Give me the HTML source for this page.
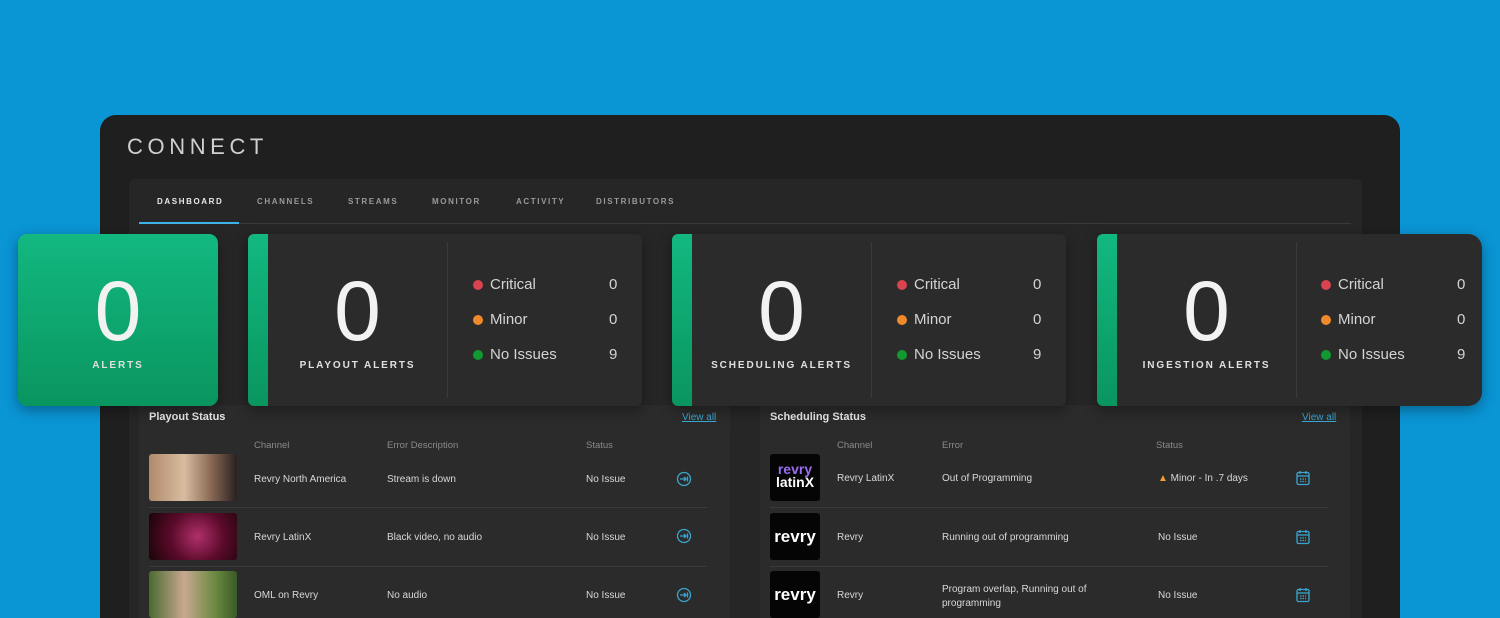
<!DOCTYPE html>
<html style="height:618px;overflow:hidden"><head><style>
*{margin:0;padding:0;box-sizing:border-box}
body{width:1500px;height:618px;background:#0a95d5;font-family:"Liberation Sans",sans-serif;position:relative;overflow:hidden}
.abs{position:absolute}
.frame{left:100px;top:115px;width:1300px;height:503px;background:#1f1f1f;border-radius:16px 16px 0 0}
.logo{left:127px;top:134px;color:#d0d0d0;font-size:22px;letter-spacing:4.6px;font-weight:300}
.inner{left:129px;top:179px;width:1233px;height:439px;background:#262626;border-radius:6px 6px 0 0}
.tab{top:197px;font-size:8px;letter-spacing:1.6px;color:#9a9a9a;font-weight:bold}
.line{left:139px;top:223px;width:1212px;height:1px;background:#3a3a3a}
.uline{left:139px;top:222px;width:100px;height:2px;background:#3cb4e6}
.green{left:18px;top:234px;width:200px;height:172px;border-radius:9px;background:linear-gradient(#12b880,#0a955f);box-shadow:0 4px 14px rgba(0,0,0,.35)}
.card{top:234px;height:172px;background:#2b2b2b;border-radius:6px;overflow:hidden;box-shadow:0 4px 14px rgba(0,0,0,.35)}
.bar{left:0;top:0;width:20px;height:100%;background:linear-gradient(#12b880,#0a955f)}
.zero{font-size:84px;color:#f2f2f2;font-weight:300;text-align:center;line-height:1}
.lbl{font-size:10px;letter-spacing:1.9px;color:#e0e0e0;font-weight:bold;text-align:center}
.div{top:8px;width:1px;height:156px;background:#3a3a3a}
.st{font-size:15px;color:#d4d4d4}
.dot{width:10px;height:10px;border-radius:50%}
.panel{top:405px;height:213px;background:#2b2b2b}
.ptitle{font-size:11px;color:#e8e8e8;font-weight:bold}
.va{font-size:10px;color:#3aa6cf;text-decoration:underline}
.hd{font-size:9.5px;color:#8a8a8a}
.cell{font-size:10px;color:#d8d8d8}
.sep{height:1px;background:#3a3a3a}
.thumb{width:88px;height:47px;border-radius:3px}
.sq{width:50px;height:47px;background:#050505;border-radius:3px;color:#fff;font-weight:bold;text-align:center}
</style></head><body>
<div class="abs frame"></div>
<div class="abs logo">CONNECT</div>
<div class="abs inner"></div>
<div class="abs tab" style="left:157px;color:#e8e8e8">DASHBOARD</div>
<div class="abs tab" style="left:257px">CHANNELS</div>
<div class="abs tab" style="left:348px">STREAMS</div>
<div class="abs tab" style="left:432px">MONITOR</div>
<div class="abs tab" style="left:516px">ACTIVITY</div>
<div class="abs tab" style="left:596px">DISTRIBUTORS</div>
<div class="abs line"></div><div class="abs uline"></div>

<div class="abs panel" style="left:139px;width:591px"></div>
<div class="abs panel" style="left:760px;width:590px"></div>
<div class="abs ptitle" style="left:149px;top:411px">Playout Status</div>
<div class="abs va" style="left:682px;top:412px">View all</div>
<div class="abs hd" style="left:254px;top:440px">Channel</div>
<div class="abs hd" style="left:387px;top:440px">Error Description</div>
<div class="abs hd" style="left:586px;top:440px">Status</div>
<div class="abs thumb" style="left:149px;top:454px;background:linear-gradient(90deg,#b08a6a,#d8bca0 40%,#8a6a55 70%,#2a2020)"></div>
<div class="abs thumb" style="left:149px;top:513px;background:radial-gradient(circle at 55% 50%,#b0306a,#5a0a2a 50%,#1a0508)"></div>
<div class="abs thumb" style="left:149px;top:571px;background:linear-gradient(90deg,#4a6a30,#c8a890 40%,#6a8a40 75%,#3a5a28)"></div>
<div class="abs cell" style="left:254px;top:474px">Revry North America</div>
<div class="abs cell" style="left:387px;top:474px">Stream is down</div>
<div class="abs cell" style="left:586px;top:474px">No Issue</div>
<div class="abs cell" style="left:254px;top:532px">Revry LatinX</div>
<div class="abs cell" style="left:387px;top:532px">Black video, no audio</div>
<div class="abs cell" style="left:586px;top:532px">No Issue</div>
<div class="abs cell" style="left:254px;top:590px">OML on Revry</div>
<div class="abs cell" style="left:387px;top:590px">No audio</div>
<div class="abs cell" style="left:586px;top:590px">No Issue</div>
<div class="abs sep" style="left:149px;top:507px;width:558px"></div>
<div class="abs sep" style="left:149px;top:566px;width:558px"></div>
<svg class="abs" style="left:676px;top:471px" width="16" height="132" viewBox="0 0 16 132" fill="none" stroke="#3aa6cf" stroke-width="1.3">
<g><circle cx="8" cy="8" r="6.5"/><path d="M4 8h6M8 6l2 2-2 2M11.5 5.5v5"/></g>
<g transform="translate(0,57)"><circle cx="8" cy="8" r="6.5"/><path d="M4 8h6M8 6l2 2-2 2M11.5 5.5v5"/></g>
<g transform="translate(0,116)"><circle cx="8" cy="8" r="6.5"/><path d="M4 8h6M8 6l2 2-2 2M11.5 5.5v5"/></g>
</svg>

<div class="abs ptitle" style="left:770px;top:411px">Scheduling Status</div>
<div class="abs va" style="left:1302px;top:412px">View all</div>
<div class="abs hd" style="left:837px;top:440px">Channel</div>
<div class="abs hd" style="left:942px;top:440px">Error</div>
<div class="abs hd" style="left:1156px;top:440px">Status</div>
<div class="abs sq" style="left:770px;top:454px;font-size:14px;line-height:13px;padding-top:9px"><span style="color:#9a6cf0">revry</span><br>latinX</div>
<div class="abs sq" style="left:770px;top:513px;font-size:17px;line-height:47px">revry</div>
<div class="abs sq" style="left:770px;top:571px;font-size:17px;line-height:47px">revry</div>
<div class="abs cell" style="left:837px;top:473px">Revry LatinX</div>
<div class="abs cell" style="left:942px;top:473px">Out of Programming</div>
<div class="abs cell" style="left:1158px;top:473px"><span style="color:#f0a030">▲</span> Minor - In .7 days</div>
<div class="abs cell" style="left:837px;top:532px">Revry</div>
<div class="abs cell" style="left:942px;top:532px">Running out of programming</div>
<div class="abs cell" style="left:1158px;top:532px">No Issue</div>
<div class="abs cell" style="left:837px;top:590px">Revry</div>
<div class="abs cell" style="left:942px;top:583px;line-height:14px">Program overlap, Running out of<br>programming</div>
<div class="abs cell" style="left:1158px;top:590px">No Issue</div>
<div class="abs sep" style="left:770px;top:507px;width:558px"></div>
<div class="abs sep" style="left:770px;top:566px;width:558px"></div>
<svg class="abs" style="left:1296px;top:470px" width="14" height="136" viewBox="0 0 14 136" fill="none" stroke="#3aa6cf" stroke-width="1.3">
<g><rect x="1" y="2.5" width="12" height="12" rx="1.5"/><path d="M1 6h12M4 1v3M10 1v3"/><path d="M4 9h6M4 11.5h6" stroke-dasharray="1.5 1"/></g>
<g transform="translate(0,59)"><rect x="1" y="2.5" width="12" height="12" rx="1.5"/><path d="M1 6h12M4 1v3M10 1v3"/><path d="M4 9h6M4 11.5h6" stroke-dasharray="1.5 1"/></g>
<g transform="translate(0,117)"><rect x="1" y="2.5" width="12" height="12" rx="1.5"/><path d="M1 6h12M4 1v3M10 1v3"/><path d="M4 9h6M4 11.5h6" stroke-dasharray="1.5 1"/></g>
</svg>

<div class="abs green"></div>
<div class="abs zero" style="left:18px;top:269px;width:200px">0</div>
<div class="abs lbl" style="left:18px;top:360px;width:200px">ALERTS</div>

<div class="abs card" style="left:248px;width:394px"><div class="abs bar"></div><div class="abs div" style="left:199px"></div></div>
<div class="abs card" style="left:672px;width:394px"><div class="abs bar"></div><div class="abs div" style="left:199px"></div></div>
<div class="abs card" style="left:1097px;width:385px;border-radius:6px 14px 14px 6px"><div class="abs bar"></div><div class="abs div" style="left:199px"></div></div>

<div class="abs zero" style="left:268px;top:269px;width:179px">0</div>
<div class="abs lbl" style="left:268px;top:360px;width:179px">PLAYOUT ALERTS</div>
<div class="abs zero" style="left:692px;top:269px;width:179px">0</div>
<div class="abs lbl" style="left:692px;top:360px;width:179px">SCHEDULING ALERTS</div>
<div class="abs zero" style="left:1117px;top:269px;width:179px">0</div>
<div class="abs lbl" style="left:1117px;top:360px;width:179px">INGESTION ALERTS</div>

<div class="abs" style="left:473px;top:276px">
<div class="abs dot" style="left:0;top:4px;background:#d9434f"></div><div class="abs st" style="left:17px;top:0">Critical</div><div class="abs st" style="left:136px;top:0">0</div>
<div class="abs dot" style="left:0;top:39px;background:#ee8a2a"></div><div class="abs st" style="left:17px;top:35px">Minor</div><div class="abs st" style="left:136px;top:35px">0</div>
<div class="abs dot" style="left:0;top:74px;background:#109a30"></div><div class="abs st" style="left:17px;top:70px;white-space:nowrap">No Issues</div><div class="abs st" style="left:136px;top:70px">9</div>
</div>
<div class="abs" style="left:897px;top:276px">
<div class="abs dot" style="left:0;top:4px;background:#d9434f"></div><div class="abs st" style="left:17px;top:0">Critical</div><div class="abs st" style="left:136px;top:0">0</div>
<div class="abs dot" style="left:0;top:39px;background:#ee8a2a"></div><div class="abs st" style="left:17px;top:35px">Minor</div><div class="abs st" style="left:136px;top:35px">0</div>
<div class="abs dot" style="left:0;top:74px;background:#109a30"></div><div class="abs st" style="left:17px;top:70px;white-space:nowrap">No Issues</div><div class="abs st" style="left:136px;top:70px">9</div>
</div>
<div class="abs" style="left:1321px;top:276px">
<div class="abs dot" style="left:0;top:4px;background:#d9434f"></div><div class="abs st" style="left:17px;top:0">Critical</div><div class="abs st" style="left:136px;top:0">0</div>
<div class="abs dot" style="left:0;top:39px;background:#ee8a2a"></div><div class="abs st" style="left:17px;top:35px">Minor</div><div class="abs st" style="left:136px;top:35px">0</div>
<div class="abs dot" style="left:0;top:74px;background:#109a30"></div><div class="abs st" style="left:17px;top:70px;white-space:nowrap">No Issues</div><div class="abs st" style="left:136px;top:70px">9</div>
</div>
</body></html>
